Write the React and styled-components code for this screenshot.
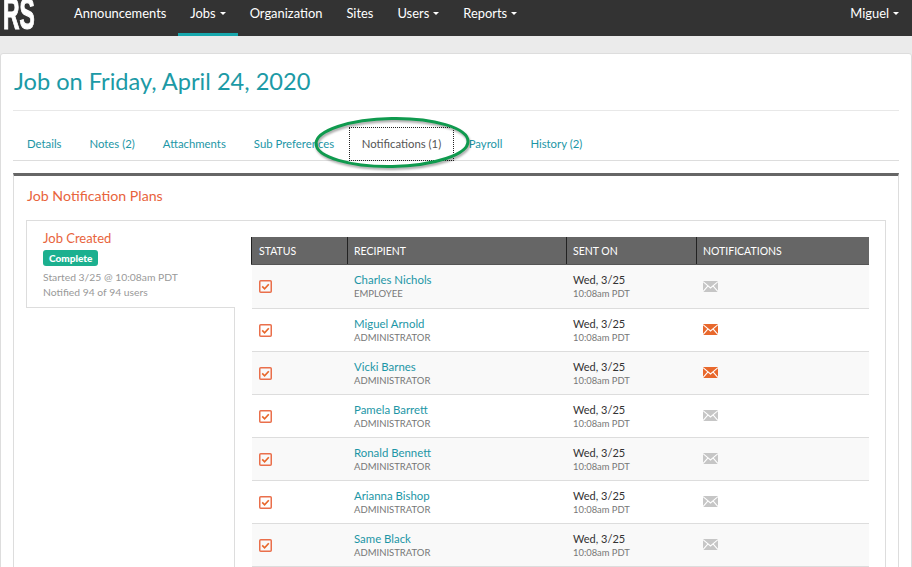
import React from "react";
import styled, { createGlobalStyle } from "styled-components";

const Global = createGlobalStyle`
  html, body { margin: 0; padding: 0; height: 567px; overflow: hidden; background: #ebebeb; }
  body { font-family: Lato, "Open Sans", sans-serif; color: #333; }
  * { box-sizing: border-box; }
`;

const navItems = [
  { label: "Announcements" },
  { label: "Jobs", caret: true, active: true },
  { label: "Organization" },
  { label: "Sites" },
  { label: "Users", caret: true },
  { label: "Reports", caret: true },
];

const tabs = [
  { label: "Details" },
  { label: "Notes (2)" },
  { label: "Attachments" },
  { label: "Sub Preferences" },
  { label: "Notifications (1)", active: true },
  { label: "Payroll" },
  { label: "History (2)" },
];

const recipients = [
  { name: "Charles Nichols", role: "Employee", tall: true },
  { name: "Miguel Arnold", role: "Administrator", opened: true },
  { name: "Vicki Barnes", role: "Administrator", opened: true },
  { name: "Pamela Barrett", role: "Administrator" },
  { name: "Ronald Bennett", role: "Administrator" },
  { name: "Arianna Bishop", role: "Administrator" },
  { name: "Same Black", role: "Administrator" },
];

const App = () => (
  <Page>
    <Global />
    <Nav>
      <Logo><span>RS</span></Logo>
      <NavList>
        {navItems.map((item) => (
          <NavItem key={item.label} $active={item.active}>
            {item.label}
            {item.caret && <Caret />}
          </NavItem>
        ))}
      </NavList>
      <UserMenu>Miguel<Caret /></UserMenu>
    </Nav>

    <Card>
      <Title>Job on Friday, April 24, 2020</Title>
      <Tabs>
        {tabs.map((tab) => (
          <Tab key={tab.label} $active={tab.active}>{tab.label}</Tab>
        ))}
      </Tabs>

      <Panel>
        <PanelTitle>Job Notification Plans</PanelTitle>
        <PlanBox>
          <Sidebar>
            <PlanItem>
              <PlanName>Job Created</PlanName>
              <Badge>Complete</Badge>
              <PlanMeta>Started 3/25 @ 10:08am PDT</PlanMeta>
              <PlanMeta>Notified 94 of 94 users</PlanMeta>
            </PlanItem>
            <SidebarRest />
          </Sidebar>

          <Table>
            <colgroup>
              <col width="96" />
              <col width="219" />
              <col width="130" />
              <col width="172" />
            </colgroup>
            <thead>
              <tr>
                <Th>Status</Th>
                <Th>Recipient</Th>
                <Th>Sent On</Th>
                <Th>Notifications</Th>
              </tr>
            </thead>
            <tbody>
              {recipients.map((r) => (
                <Row key={r.name} $tall={r.tall}>
                  <Td><CheckIcon /></Td>
                  <Td>
                    <Name>{r.name}</Name>
                    <Role>{r.role}</Role>
                  </Td>
                  <Td>
                    <SentDate>Wed, 3/25</SentDate>
                    <SentTime>10:08am PDT</SentTime>
                  </Td>
                  <Td><MailIcon color={r.opened ? "#e8682c" : "#c6c6c6"} /></Td>
                </Row>
              ))}
            </tbody>
          </Table>
        </PlanBox>
      </Panel>
    </Card>

    <Callout viewBox="0 0 164 56" aria-hidden="true">
      <ellipse cx="81" cy="27.5" rx="76" ry="24" transform="rotate(-1 81 27.5)" />
    </Callout>
  </Page>
);

const CheckIcon = () => (
  <CheckSvg viewBox="0 0 13 13" aria-hidden="true">
    <rect x="0.75" y="0.75" width="11.5" height="11.5" rx="1" fill="none" stroke="#ea6f4b" strokeWidth="1.5" />
    <path d="M3.2 6.4 L5.6 8.8 L9.8 4.2" fill="none" stroke="#e8682c" strokeWidth="1.7" />
  </CheckSvg>
);

const MailIcon = ({ color }) => (
  <MailSvg viewBox="0 0 15 11" aria-hidden="true">
    <rect width="15" height="11" fill={color} />
    <path d="M0 0.6 L7.5 7 L15 0.6 M0 10.6 L5 4.9 M15 10.6 L10 4.9" fill="none" stroke="#fff" strokeWidth="1.1" />
  </MailSvg>
);

const Page = styled.div`
  position: relative;
  width: 912px;
  height: 567px;
  overflow: hidden;
`;

const Nav = styled.nav`
  display: flex;
  align-items: stretch;
  height: 36px;
  background: #333;
  color: #fff;
`;

const Logo = styled.div`
  width: 62px;
  overflow: hidden;
  span {
    display: block;
    margin: -8px 0 0 3px;
    font: 700 44px/44px "Liberation Sans", Arial, sans-serif;
    color: #fff;
    transform: scaleX(0.52);
    transform-origin: left top;
    -webkit-text-stroke: 1.2px #fff;
  }
`;

const NavList = styled.div`
  display: flex;
  flex: 1;
`;

const NavItem = styled.div`
  display: flex;
  align-items: center;
  padding: 3px 12px 10px;
  font-size: 12.9px;
  line-height: 16px;
  color: #fff;
  border-bottom: 3px solid ${(p) => (p.$active ? "#17a8ad" : "transparent")};
`;

const UserMenu = styled.div`
  display: flex;
  align-items: center;
  padding: 3px 13px 10px 0;
  font-size: 12.9px;
  line-height: 16px;
  border-bottom: 3px solid transparent;
`;

const Caret = styled.i`
  display: inline-block;
  margin-left: 4px;
  border-top: 3px solid #fff;
  border-left: 3px solid transparent;
  border-right: 3px solid transparent;
`;

const Card = styled.main`
  height: 540px;
  margin-top: 17px;
  padding: 0 12px;
  background: #fff;
  border: 1px solid #ddd;
  border-radius: 3px;
`;

const Title = styled.h1`
  margin: 0;
  padding: 12px 0 14px 1px;
  font-size: 23.6px;
  line-height: 30px;
  font-weight: 400;
  color: #1c9aa6;
  border-bottom: 1px solid #e8e8e8;
`;

const Tabs = styled.div`
  display: flex;
  height: 50px;
  padding: 16px 0 0 1px;
  border-bottom: 1px solid #ddd;
`;

const Tab = styled.div`
  height: 34px;
  padding: ${(p) => (p.$active ? "9px 12.5px 0" : "9px 13px 0")};
  margin-right: 2px;
  font-size: 11.35px;
  line-height: 15px;
  color: ${(p) => (p.$active ? "#555" : "#1c96a6")};
  outline: ${(p) => (p.$active ? "1px dotted #222" : "none")};
  outline-offset: -1px;
`;

const Panel = styled.section`
  margin-top: 12px;
  height: 400px;
  padding: 0 12px;
  border-top: 3px solid #666;
  border-left: 1px solid #ddd;
  border-right: 1px solid #ddd;
`;

const PanelTitle = styled.h2`
  margin: 0;
  padding: 11px 0 15px 1px;
  font-size: 14.2px;
  line-height: 18px;
  font-weight: 400;
  color: #e8643c;
`;

const PlanBox = styled.div`
  display: flex;
  align-items: flex-start;
  width: 860px;
  height: 360px;
  border-top: 1px solid #ddd;
  border-right: 1px solid #ddd;
`;

const Sidebar = styled.aside`
  width: 209px;
  align-self: stretch;
  display: flex;
  flex-direction: column;
`;

const PlanItem = styled.div`
  height: 87px;
  padding: 9px 0 0 16px;
  border-left: 1px solid #ddd;
  border-bottom: 1px solid #ddd;
`;

const SidebarRest = styled.div`
  flex: 1;
  border-right: 1px solid #ddd;
`;

const PlanName = styled.div`
  font-size: 13px;
  line-height: 17px;
  color: #e8643c;
`;

const Badge = styled.span`
  display: inline-block;
  margin: 3px 0 4px;
  padding: 0 6px;
  height: 16px;
  border-radius: 3px;
  background: #1cb08f;
  color: #fff;
  font-size: 10px;
  line-height: 16px;
  font-weight: 900;
  vertical-align: top;
`;

const PlanMeta = styled.div`
  font-size: 10.35px;
  line-height: 15px;
  color: #999;
`;

const Table = styled.table`
  width: 617px;
  margin: 16px 0 0 16px;
  border-collapse: collapse;
  table-layout: fixed;
`;

const Th = styled.th`
  height: 27px;
  padding: 1px 6px 0;
  background: #666;
  border-left: 1px solid #222;
  border-bottom: 1px solid #555;
  color: #fff;
  font-size: 10.5px;
  font-weight: 400;
  text-align: left;
  text-transform: uppercase;
  &:first-child { padding-left: 7px; }
`;

const Row = styled.tr`
  height: ${(p) => (p.$tall ? "44px" : "43px")};
  border-bottom: 1px solid #ddd;
  &:nth-child(odd) { background: #f9f9f9; }
`;

const Td = styled.td`
  padding: 0 6.5px;
  vertical-align: middle;
  &:first-child { padding-left: 7px; }
  &:first-child svg { margin-top: 1px; }
`;

const Name = styled.div`
  font-size: 11.4px;
  line-height: 15px;
  color: #1c96a6;
`;

const Role = styled.div`
  font-size: 9.5px;
  line-height: 13px;
  color: #777;
  text-transform: uppercase;
`;

const SentDate = styled.div`
  font-size: 11px;
  line-height: 15px;
  color: #333;
`;

const SentTime = styled.div`
  font-size: 9.4px;
  line-height: 13px;
  color: #777;
`;

const CheckSvg = styled.svg`
  display: block;
  width: 13px;
  height: 13px;
`;

const MailSvg = styled.svg`
  display: block;
  width: 15px;
  height: 11px;
`;

const Callout = styled.svg`
  position: absolute;
  left: 311px;
  top: 115px;
  width: 164px;
  height: 56px;
  overflow: visible;
  filter: drop-shadow(1px 2px 1px rgba(0, 0, 0, 0.35));
  ellipse {
    fill: none;
    stroke: #0f9a4e;
    stroke-width: 3;
  }
`;

export default App;
